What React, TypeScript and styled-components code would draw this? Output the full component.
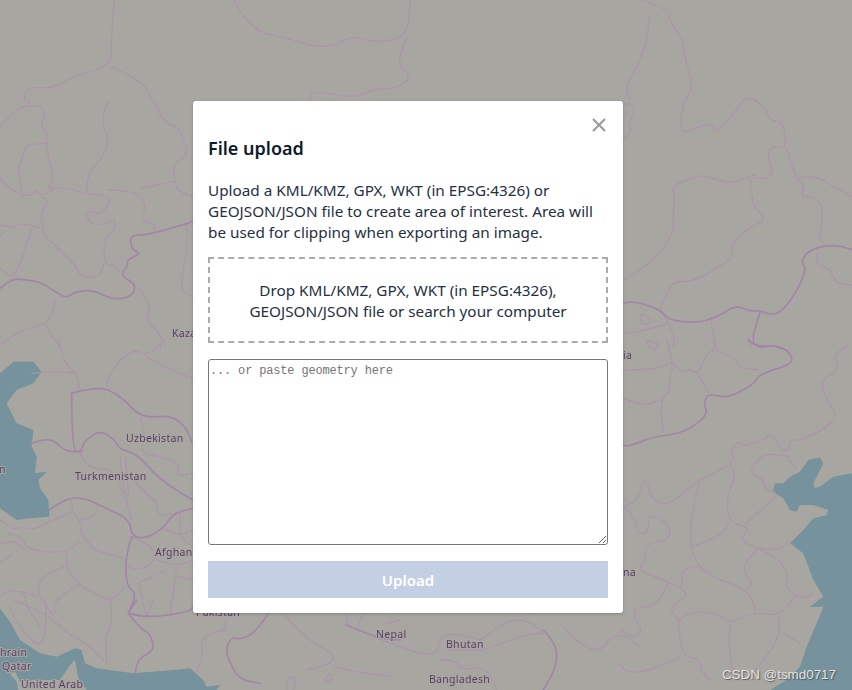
import React from "react";
import styled, { createGlobalStyle } from "styled-components";

const Global = createGlobalStyle`
  html, body { margin: 0; padding: 0; height: 100%; overflow: hidden; background: #a8a6a1; }
  #root { height: 100%; }
  * { box-sizing: border-box; }
`;

const Page = styled.main`
  position: relative;
  width: 852px;
  height: 690px;
  overflow: hidden;
  background: #a8a6a1;
  font-family: "Noto Sans", "Open Sans", sans-serif;
`;

const MapDrawing = styled.svg`
  position: absolute;
  inset: 0;
  width: 852px;
  height: 690px;
  display: block;
  filter: blur(0.3px);
`;

const Overlay = styled.div`
  position: absolute;
  inset: 0;
  display: flex;
  align-items: flex-start;
  justify-content: flex-start;
  padding: 101px 0 0 193px;
`;

const Modal = styled.section`
  position: relative;
  width: 430px;
  height: 512px;
  padding: 34px 15px 15px;
  display: flex;
  flex-direction: column;
  background: #fff;
  border-radius: 3px;
  box-shadow: 0 1px 3px rgba(0, 0, 0, 0.22);
`;

const CloseButton = styled.button`
  position: absolute;
  top: 16px;
  right: 16px;
  width: 16px;
  height: 16px;
  padding: 0;
  border: 0;
  background: none;
  color: #9a9a9a;
  display: flex;
`;

const Title = styled.h2`
  margin: 0;
  font-size: 18px;
  line-height: 26px;
  font-weight: 600;
  color: #0f1a2c;
`;

const Description = styled.p`
  margin: 19px 0 0;
  font-size: 15.3px;
  line-height: 21px;
  color: #27303f;
`;

const DropZone = styled.div`
  margin-top: 14px;
  height: 86px;
  border: 2px dashed #ababab;
  display: flex;
  align-items: center;
  justify-content: center;
  padding: 2px 30px 0;
  text-align: center;
  font-size: 15.3px;
  line-height: 21px;
  color: #27303f;
`;

const GeometryInput = styled.textarea`
  display: block;
  margin-top: 16px;
  width: 400px;
  height: 186px;
  padding: 4px 1px 2px;
  border: 1px solid #767676;
  border-radius: 3px;
  background: #fff;
  font-family: "Liberation Mono", monospace;
  font-size: 12px;
  letter-spacing: -0.17px;
  line-height: 14px;
  outline: none;
  &::placeholder { color: #757575; opacity: 1; }
`;

const UploadButton = styled.button`
  margin-top: 16px;
  height: 37px;
  width: 400px;
  border: 0;
  padding: 0;
  background: #c3d0e3;
  color: #fff;
  font-family: inherit;
  font-size: 15px;
  font-weight: 600;
`;

const Watermark = styled.span`
  position: absolute;
  right: 16px;
  bottom: 7px;
  font-family: "Liberation Sans", sans-serif;
  font-size: 13.4px;
  line-height: 16px;
  color: #e2e2e2;
  text-shadow: 1px 1px 1px rgba(60, 60, 60, 0.7);
`;

const Water = styled.path`
  fill: #76929c;
`;

const Land = styled.path`
  fill: #a8a6a1;
`;

const Border = styled.path<{ $heavy?: boolean }>`
  fill: none;
  stroke: ${(p) => (p.$heavy ? "#a386a7" : "#ab96a9")};
  stroke-width: ${(p) => (p.$heavy ? 1.7 : 1.3)}px;
  stroke-linejoin: round;
  stroke-linecap: round;
  vector-effect: non-scaling-stroke;
`;

const Label = styled.text`
  font-family: "Noto Sans", sans-serif;
  font-size: 10.5px;
  letter-spacing: 0.3px;
  fill: #5c3f66;
  stroke: #a8a6a1;
  stroke-width: 2px;
  paint-order: stroke;
`;

const smooth = (d: string) =>
  d
    .split("M")
    .filter(Boolean)
    .map((part) => {
      const pts = part.trim().split("L").map((p) => p.trim().split(/\s+/).map(Number));
      if (pts.length < 3) return `M${pts.map((p) => p.join(" ")).join("L")}`;
      let out = `M${pts[0].join(" ")}`;
      for (let i = 1; i < pts.length - 1; i++) {
        const mx = (pts[i][0] + pts[i + 1][0]) / 2;
        const my = (pts[i][1] + pts[i + 1][1]) / 2;
        out += `Q${pts[i][0]} ${pts[i][1]} ${mx} ${my}`;
      }
      return `${out}L${pts[pts.length - 1].join(" ")}`;
    })
    .join("");

const Route = ({ d, heavy }: { d: string; heavy?: boolean }) => <Border d={smooth(d)} $heavy={heavy} />;

const upperStrip = [
  "M210 0L205 100L205 200L140 225L100 265L50 260L45 300",
  "M205 200L260 240L280 300",
  "M430 0L460 90L520 110L600 150L650 105L690 130L750 110L755 0",
  "M750 110L725 190L760 230L725 270L690 265L650 295L575 270L570 300",
  "M1180 0L1235 30L1230 60L1255 110L1260 170L1275 260L1262 300",
  "M1370 300L1382 293L1392 300",
  "M1195 50L1190 150L1150 260L1160 300",
];

const upperLeft = [
  "M0 80L45 30L85 15L130 20L135 50L120 75L140 100L140 150L155 210L160 250L140 260L165 265L210 265L255 280",
  "M85 15L90 0",
  "M325 0L300 60L330 120L305 175L280 200L260 240L262 280",
  "M70 290L50 200L70 175L75 135L135 130",
  "M0 235L25 260L65 290L110 280L105 265L125 290L165 265",
  "M125 290L150 300L120 340L130 380L125 400L180 450L230 500L245 535L300 530L310 495",
  "M0 375L40 385L60 368L120 385",
  "M95 385L60 490L40 535L0 505",
  "M0 405L15 395",
  "M262 280L325 285L330 310L300 345L270 330L255 345L285 380L330 365L345 355L345 395L315 405L310 495L350 495L360 520",
  "M325 270L400 270L440 310L425 350L430 365L462 370L462 390",
  "M425 265L500 250L525 240L530 270L578 290",
  "M460 0L490 70L530 75L550 120L565 165L520 190L525 240",
  "M560 370L565 440L545 530L545 575L578 590",
  "M410 560L440 590L450 630L435 660L490 710L480 750",
  "M165 600L160 640L135 670L145 690L185 750",
  "M135 670L100 680L50 700L0 735",
];

const upperRight = [
  "M5 10L35 15L35 45L20 70L30 90L5 120",
  "M190 0L170 70L190 100L215 85L270 70L280 100L320 60L365 0",
  "M395 0L430 20L440 60L485 65L495 150L450 135L435 175L455 210L440 235L390 235L405 220L360 240L325 250L270 235L245 225L190 240L150 260L160 295L150 375L160 380L125 450L50 515L5 540",
  "M495 150L515 215L535 250L550 265L535 290L575 290L600 315L600 380L590 400L605 435",
  "M525 235L570 225L630 255L690 290",
  "M385 235L390 320L420 340L425 365L385 380L325 430L335 470L300 495L215 545L150 545L130 590L115 625",
  "M590 450L575 490L625 505L640 550L690 555",
  "M55 645L60 640L85 655L80 675L55 670L55 645",
  "M10 700L50 695L110 680L140 670",
  "M70 720L110 730L100 750",
  "M265 660L285 750",
  "M115 630L155 690L155 740",
];

const lowerLeft = [
  "M180 0L185 60L230 100L240 150",
  "M95 100L190 95L230 100",
  "M320 140L325 95L400 25L440 50L495 0",
  "M440 50L530 100L600 120",
  "M360 350L370 450L395 540",
  "M240 340L255 385L350 390L360 450L390 480L375 350",
  "M420 235L440 280L420 340L480 350L540 370L530 410L578 400",
  "M215 480L215 515L240 540L245 590L270 610L280 630L370 655",
  "M295 495L290 530L240 540",
  "M0 540L40 570L60 560L100 570L150 545L215 515",
  "M20 580L75 590L75 630L200 640L240 600",
  "M0 610L40 600L75 630",
  "M0 670L40 640",
  "M200 640L195 680L235 735L335 790L375 740",
  "M195 680L115 710L115 770L160 825",
  "M235 735L165 775L165 820",
  "M0 770L20 750L70 755L110 770",
  "M70 755L80 800L120 860",
  "M470 480L470 530L515 520",
  "M400 420L470 490",
  "M490 565L540 590L578 570",
  "M540 520L535 590L578 620",
  "M395 590L450 610L470 660L415 695L375 670",
  "M470 660L530 680L578 660",
  "M530 680L510 830",
  "M415 730L440 830",
  "M500 690L415 730",
  "M530 710L578 720",
];

const lowerRight = [
  "M140 0L160 70L150 110L150 155L120 180L130 280",
  "M160 70L185 100L205 85L235 105L260 40L285 30L280 0",
  "M235 105L265 155",
  "M285 30L345 50L360 85L415 90",
  "M10 90L100 90L150 70",
  "M10 175L70 200L120 180",
  "M385 0L395 20",
  "M80 0L80 20L115 30L110 0",
  "M10 500L55 485L65 425L90 425L85 460L115 490L155 490L240 415L345 370L330 330L360 300L365 320L430 300L460 280L480 330L510 330L510 295L540 305L660 240L620 180L600 120L660 90L640 45L680 20",
  "M500 350L530 385",
  "M510 350L450 340L420 350L385 400L430 415L435 450L465 455",
  "M330 370L350 405L320 465L325 545L375 560L385 570L360 600L410 625L470 630L510 610",
  "M240 415L215 520L210 620L235 680L290 715L370 745L400 780L405 815",
  "M325 545L320 575L260 605L215 620",
  "M465 470L380 550",
  "M10 500L40 520L55 590L90 570L80 520L150 550L150 600L75 610L80 660L50 690L145 725L185 745L205 770L145 800L175 840",
  "M235 680L185 680L185 740",
  "M145 725L115 800L45 800L40 830L70 870L40 895L0 870",
  "M415 625L390 650L365 690L400 730L380 750",
  "M415 625L470 650L510 710L490 740L550 780L580 760",
  "M175 840L180 950L240 955L240 990L270 1020",
  "M175 840L220 810L300 825L330 850L405 815L475 830L525 770",
  "M330 850L325 920L340 1000",
  "M475 830L490 880L400 1000",
  "M490 880L540 910",
  "M180 950L100 990L20 1000L0 970",
];

const bottomStrip = [
  "M30 25L60 90L130 150L140 40L135 0",
  "M40 0L140 40L200 100L260 130L310 180",
  "M330 0L340 60L315 110L320 190",
  "M440 50L460 0",
  "M510 50L515 0",
  "M590 215L610 170L600 120L640 95L680 90",
  "M680 60L670 90",
  "M850 45L880 75L940 130L1000 160L1000 190L920 210",
  "M1000 200L1090 220L1180 230",
  "M975 240L990 210L1000 250L975 240",
  "M860 270L860 230L890 235L880 270",
  "M1040 0L1040 75",
  "M1070 90L1090 40",
  "M1160 70L1200 60",
];

const App = () => (
  <Page>
    <Global />
    <MapDrawing viewBox="0 0 852 690">
      <g transform="scale(0.5434 0.3333)">
        {upperStrip.map((d) => <Route key={d} d={d} />)}
      </g>
      <g transform="translate(0 100) scale(0.3333)">
        {upperLeft.map((d) => <Route key={d} d={d} />)}
        <Route heavy d="M578 365L530 380L440 405L390 405L395 450L425 460L380 480L385 495L360 525L410 555L395 590L340 600L280 570L225 575L200 595L165 575L120 545L75 540L40 535L0 565" />
      </g>
      <g transform="translate(622 100) scale(0.3333)">
        {upperRight.map((d) => <Route key={d} d={d} />)}
        <Route heavy d="M690 450L650 432L570 445L535 480L555 510L510 600L460 650L410 630L385 635L340 615L290 650L220 670L140 660L115 630L60 610L20 605L5 610" />
        <Route heavy d="M415 635L385 720L410 745L450 735L490 750" />
      </g>
      <g transform="translate(0 340) scale(0.3333)">
        <Water d="M0 100L40 65L100 65L125 95L100 130L50 150L20 190L50 250L100 270L95 320L110 350L105 400L140 395L115 420L120 445L145 480L148 530L90 535L50 540L0 505Z" />
        {lowerLeft.map((d) => <Route key={d} d={d} />)}
        <Route heavy d="M215 160L300 135L370 175L425 235L515 225L560 265L575 305" />
        <Route heavy d="M215 160L215 335L245 335L250 305L300 270L345 300L360 330L410 340L480 420L578 480" />
        <Route heavy d="M95 310L150 288L195 335L245 335" />
        <Route heavy d="M148 510L180 485L240 468L330 510L390 540L395 590L440 595L490 565L520 520L578 505" />
        <Route heavy d="M395 590L375 650L380 740L410 760L385 820" />
      </g>
      <g transform="translate(620 340) scale(0.3333)">
        <Water d="M696 400L640 410L600 440L585 445L580 430L610 370L600 352L565 360L540 395L510 410L490 430L465 430L458 455L490 475L510 510L530 515L540 495L580 495L625 510L620 525L580 535L550 570L510 610L550 640L580 720L610 770L570 800L610 800L590 850L560 920L540 980L500 1020L450 1050L696 1050Z" />
        {lowerRight.map((d) => <Route key={d} d={d} />)}
        <Route heavy d="M385 0L400 20L490 15L530 70L420 100L400 135L320 175L265 160L250 190L265 225L190 280L100 290L25 320L10 315" />
      </g>
      <g transform="translate(0 600) scale(0.3333)">
        <Water d="M0 25L30 65L60 120L120 160L170 170L225 145L245 150L255 190L290 205L400 220L520 210L570 205L610 240L620 260L660 255L650 270L0 270Z" />
        <Land d="M30 220L45 215L60 245L100 240L180 240L210 195L225 180L235 235L260 270L55 270L50 245Z" />
        {bottomStrip.map((d) => <Route key={d} d={d} />)}
        <Route heavy d="M385 40L440 55L570 35L578 20" />
        <Route heavy d="M385 40L420 85L450 100L465 150L415 175L405 220" />
        <Route heavy d="M385 40L410 0" />
        <Route heavy d="M805 40L770 95L720 120L695 110L675 150L700 210L725 240L780 250" />
        <Route heavy d="M1040 75L1130 115L1200 120" />
      </g>
      <g transform="translate(340 610) scale(0.3333)">
        <Route d="M100 80L200 120L290 140L300 80L350 70L420 90" />
        <Route d="M320 120L430 120" />
        <Route d="M300 150L350 150L360 180L440 170L470 240" />
        <Route d="M420 90L500 30L560 30L600 60L610 70" />
        <Route d="M430 120L550 75L610 70" />
        <Route heavy d="M610 60L650 100L650 170L610 240" />
        <Route d="M670 50L760 150L830 60L900 110" />
      </g>
      <Label x="172" y="337">Kaza</Label>
      <Label x="126" y="442">Uzbekistan</Label>
      <Label x="75" y="480">Turkmenistan</Label>
      <Label x="155" y="556">Afghan</Label>
      <Label x="196" y="616">Pakistan</Label>
      <Label x="-1" y="473">n</Label>
      <Label x="0" y="656">hrain</Label>
      <Label x="2" y="670">Qatar</Label>
      <Label x="21" y="688">United Arab</Label>
      <Label x="376" y="638">Nepal</Label>
      <Label x="446" y="648">Bhutan</Label>
      <Label x="429" y="683">Bangladesh</Label>
      <Label x="623" y="359">ia</Label>
      <Label x="623" y="576">na</Label>
    </MapDrawing>
    <Overlay>
      <Modal>
        <CloseButton aria-label="Close">
          <svg width="16" height="16" viewBox="0 0 16 16">
            <path d="M2 2L14 14M14 2L2 14" stroke="currentColor" strokeWidth="2.1" fill="none" />
          </svg>
        </CloseButton>
        <Title>File upload</Title>
        <Description>
          Upload a KML/KMZ, GPX, WKT (in EPSG:4326) or GEOJSON/JSON file to create area of interest. Area will be used for clipping when exporting an image.
        </Description>
        <DropZone>Drop KML/KMZ, GPX, WKT (in EPSG:4326), GEOJSON/JSON file or search your computer</DropZone>
        <GeometryInput placeholder="... or paste geometry here" />
        <UploadButton disabled>Upload</UploadButton>
      </Modal>
    </Overlay>
    <Watermark>CSDN @tsmd0717</Watermark>
  </Page>
);

export default App;
